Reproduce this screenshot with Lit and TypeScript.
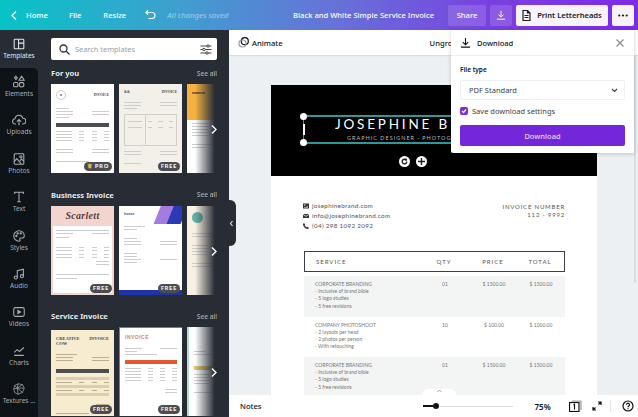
import { LitElement, html, css, svg } from "lit";
import { customElement } from "lit/decorators.js";

const railIcons: Record<string, unknown> = {
  Templates: svg`<rect x="2.5" y="2.5" width="11" height="11" rx="1"/><path d="M7.5 2.5v11M7.5 7h6"/>`,
  Elements: svg`<path d="M4.500 1.500l1.600 1.600-1.600 2.200-1.600-2.200z"/><path d="M11 1.500l3 4.500H8z"/><rect x="1.800" y="8.500" width="5" height="5" rx="1.500"/><circle cx="11" cy="11" r="2.600"/>`,
  Uploads: svg`<path d="M4.500 12.500h-.7a3 3 0 0 1-.3-6 4.600 4.600 0 0 1 9-.4 3.200 3.200 0 0 1 .2 6.400h-1.200"/><path d="M8 14V7.500M5.600 9.800L8 7.400l2.400 2.400"/>`,
  Photos: svg`<rect x="2.500" y="2" width="11" height="12" rx="1"/><circle cx="10.200" cy="5.500" r="1.300"/><path d="M2.500 11l3-3.500 5 6M9 10l2-1.800 2.500 2.500"/>`,
  Text: svg`<path d="M3 4.500V2.500h10v2M8 2.500v11M6 13.500h4"/>`,
  Styles: svg`<path d="M8 2a6 6 0 1 0 0 12c1.500 0 1.400-1.200 1-2-.5-1 .2-1.800 1.200-1.800H12c1.300 0 2-1 2-2.400C14 4.500 11.500 2 8 2z"/><circle cx="5" cy="8" r=".7"/><circle cx="6.500" cy="5" r=".7"/><circle cx="10" cy="5" r=".7"/>`,
  Audio: svg`<path d="M6 12V4.300l7-1.800v8"/><circle cx="4.300" cy="12" r="1.800"/><circle cx="11.300" cy="10.500" r="1.800"/>`,
  Videos: svg`<rect x="2" y="3" width="12" height="10" rx="1.800"/><path d="M6.800 6.200l3 1.800-3 1.800z" fill="currentColor"/>`,
  Charts: svg`<path d="M2.500 9.500l3.500-3 2.500 2 5-4.500M2.500 13h11"/>`,
  "Textures ...": svg`<path d="M3 4l4-2 5 1 2 4-2 5-5 2-4-2-1-4zM7 2l-1 5 6 5M3 4l3 3-4 1M6 7l1 7M12 3L6 7M14 7H6" stroke-width=".8"/>`,
};

type Kind = "plain" | "beige" | "orange" | "scarlett" | "shapes" | "cream" | "cow" | "stripe" | "mint";

@customElement("doc-thumb")
export class DocThumb extends LitElement {
  static properties = { kind: {}, badge: {} };
  kind: Kind = "plain";
  badge = "";

  static styles = css`
    :host {
      display: block;
      flex: none;
      width: 63px;
      height: 89px;
    }
    .t {
      position: relative;
      display: flex;
      flex-direction: column;
      gap: 2px;
      box-sizing: border-box;
      height: 100%;
      padding: 6px 5px;
      background: #fff;
      overflow: hidden;
      font-family: "Liberation Serif", serif;
      color: #444;
    }
    .head {
      display: flex;
      justify-content: space-between;
      align-items: center;
      margin-bottom: 6px;
      font-size: 3.500px;
      font-weight: 700;
    }
    .ring {
      display: flex;
      align-items: center;
      justify-content: center;
      width: 10px;
      height: 10px;
      border: 1px solid #ccc;
      border-radius: 50%;
      box-sizing: border-box;
    }
    .ring::after {
      content: "";
      width: 2px;
      height: 2px;
      border-radius: 50%;
      background: #777;
    }
    .rw {
      display: flex;
      justify-content: space-between;
      flex: none;
    }
    .l {
      height: 1px;
      width: 40%;
      background: #cdcdcd;
      flex: none;
    }
    .rw .l {
      width: 30%;
    }
    .rw .l:nth-child(n + 2) {
      width: 9%;
    }
    .rw.two .l {
      width: 32%;
    }
    .l.w {
      width: 100%;
    }
    .l.m {
      width: 62%;
    }
    .l.s {
      width: 24%;
    }
    .l.r {
      align-self: flex-end;
    }
    .bar {
      height: 4px;
      background: #4a4d52;
      margin: 3px 0 2px;
      flex: none;
    }
    .sp {
      height: 4px;
      flex: none;
    }
    .grid {
      display: flex;
      flex-direction: column;
      gap: 5px;
      box-sizing: border-box;
      height: 32px;
      flex: none;
      padding: 6px 3px;
      border: 1px solid #d2d0c6;
      margin: 3px 0;
      background: linear-gradient(90deg, transparent 40%, #d2d0c6 40%, #d2d0c6 41%, transparent 41%, transparent 62%, #d2d0c6 62%, #d2d0c6 63%, transparent 63%);
    }
    .badge {
      position: absolute;
      right: 2px;
      bottom: 2px;
      height: 9px;
      padding: 0 3px;
      border-radius: 4.500px;
      background: #4a4d52;
      color: #eee;
      font: 700 6px/9px "Noto Sans", sans-serif;
      letter-spacing: 0.6px;
    }
    .badge i {
      color: #f1b640;
      font-style: normal;
    }
    .beige {
      background: #f2f0e9;
    }
    .orange {
      background: linear-gradient(#f6b141 0 40%, #fff 40%);
    }
    .orange .head {
      color: #222;
      font: 700 4px "Liberation Sans", sans-serif;
      margin-bottom: 26px;
    }
    .scarlett {
      background: #f3d5cf;
      padding: 0 2px 2px;
    }
    .scarlett .top {
      flex: none;
      height: 18px;
      text-align: center;
      font: italic 700 10px/19px "Liberation Serif", serif;
      letter-spacing: 0.3px;
      color: #5a3e3a;
    }
    .scarlett .in {
      flex: 1;
      display: flex;
      flex-direction: column;
      gap: 2.500px;
      background: #fff;
      padding: 4px 3px;
    }
    .shapes .blob {
      position: absolute;
      top: -4px;
      right: 10px;
      width: 14px;
      height: 22px;
      background: #a67be0;
      transform: skewX(-22deg);
    }
    .shapes .blob.b {
      right: -3px;
      background: #2a3bb5;
    }
    .shapes .foot {
      position: absolute;
      left: 0;
      right: 0;
      bottom: 0;
      height: 5px;
      background: #1f33a6;
    }
    .shapes .title {
      font: 700 3px "Liberation Sans", sans-serif;
      color: #2a3bb5;
      margin-bottom: 8px;
    }
    .cream {
      background: #f8f1e3;
    }
    .cream .dot {
      width: 11px;
      height: 11px;
      border-radius: 50%;
      background: #5fb0a8;
      margin-bottom: 8px;
    }
    .cow {
      background: #f7ecd0;
      border-top: 3px solid #272c35;
    }
    .cow .head {
      align-items: flex-start;
      font-size: 4.500px;
      line-height: 5px;
    }
    .cow .bar {
      margin-top: 6px;
    }
    .cow .shade {
      height: 3px;
      background: #dbcfae;
      flex: none;
    }
    .cow .l {
      background: #b9ae92;
    }
    .stripe {
      border-left: 1px solid #e2592a;
      border-top: 1px solid #e2592a;
    }
    .stripe .head {
      color: #d88a4c;
      font: 700 5px "Liberation Sans", sans-serif;
      letter-spacing: 0.5px;
    }
    .stripe .bar {
      background: #e2592a;
    }
    .mint {
      border-left: 2px solid #bcdcd2;
      justify-content: center;
    }
    .mint .bar {
      background: #e2c56a;
    }
  `;

  body() {
    const l = (c = "") => html`<div class="l ${c}"></div>`;
    const rows = (n: number) =>
      Array.from({ length: n }, () => html`<div class="rw">${l()}${l()}${l()}${l()}</div>`);
    const two = html`<div class="rw two">${l()}${l()}</div>`;
    switch (this.kind) {
      case "beige":
        return html`<div class="head"><span>&amp;&amp;</span><span>INVOICE</span></div>
          ${two}${two}${l("s")}
          <div class="grid">${rows(2)}</div>
          ${two}${two}<div class="sp"></div>${two}`;
      case "orange":
        return html`<div class="head"><span>manna</span></div>
          ${rows(5)}<div class="sp"></div>${l()}${l("s")}`;
      case "scarlett":
        return html`<div class="top">Scarlett</div>
          <div class="in">${l("w")}${two}${l("s")}<div class="sp"></div>${rows(4)}${l("s r")}${l("s r")}<div class="sp"></div>${l("w")}${l()}</div>`;
      case "shapes":
        return html`<div class="blob"></div><div class="blob b"></div>
          <div class="title">Invoice</div>
          ${l()}${l("s")}<div class="sp"></div>${l("s")}${two}${two}<div class="sp"></div>${l("s")}${l("s")}${two}${l("s")}
          <div class="foot"></div>`;
      case "cream":
        return html`<div class="dot"></div>${l("m")}${l()}<div class="sp"></div>${rows(4)}<div class="sp"></div>${l("m")}${l()}`;
      case "cow":
        return html`<div class="head"><span>CREATIVE<br />COW</span><span>INVOICE</span></div>
          ${l()}${two}${two}<div class="bar"></div>
          <div class="shade"></div>${rows(1)}<div class="shade"></div>${rows(1)}<div class="shade"></div>
          <div class="sp"></div>${l("s r")}${l("s r")}${l("s r")}${l("m")}`;
      case "stripe":
        return html`<div class="head"><span>INVOICE</span></div>
          ${two}${l("s")}${l("m")}<div class="bar"></div>${rows(5)}<div class="sp"></div>${l("s r")}${l("s r")}`;
      case "mint":
        return html`${l("s")}${l()}<div class="sp"></div><div class="bar"></div>${rows(4)}<div class="sp"></div>${l()}`;
      default:
        return html`<div class="head"><div class="ring"></div><span>INVOICE</span></div>
          ${l("s")}${two}${two}${l("s")}<div class="bar"></div>${rows(4)}
          <div class="sp"></div>${two}${two}<div class="sp"></div>${l("m")}`;
    }
  }

  render() {
    return html`<div class="t ${this.kind}">
      ${this.body()}
      ${this.badge === "PRO"
        ? html`<span class="badge"><i>♛</i> PRO</span>`
        : this.badge
          ? html`<span class="badge">${this.badge}</span>`
          : ""}
    </div>`;
  }
}

const sections: { title: string; thumbs: [Kind, string][] }[] = [
  { title: "For you", thumbs: [["plain", "PRO"], ["beige", "FREE"], ["orange", ""]] },
  { title: "Business Invoice", thumbs: [["scarlett", "FREE"], ["shapes", "FREE"], ["cream", ""]] },
  { title: "Service Invoice", thumbs: [["cow", "FREE"], ["stripe", "FREE"], ["mint", ""]] },
];

const lineItems = [
  { name: "CORPORATE BRANDING", notes: ["Inclusive of brand bible", "5 logo studies", "5 free revisions"], qty: "01", price: "$ 1500.00", total: "$ 1500.00" },
  { name: "COMPANY PHOTOSHOOT", notes: ["2 layouts per head", "2 photos per person", "With retouching"], qty: "10", price: "$ 100.00", total: "$ 1000.00" },
  { name: "CORPORATE BRANDING", notes: ["Inclusive of brand bible", "5 logo studies", "5 free revisions"], qty: "01", price: "$ 1500.00", total: "$ 1500.00" },
];

@customElement("app-root")
export class AppRoot extends LitElement {
  static styles = css`
    :host {
      display: block;
      position: relative;
      width: 638px;
      height: 417px;
      overflow: hidden;
      font-family: "Noto Sans", "Open Sans", sans-serif;
      color: #0e1318;
    }
    svg {
      display: block;
      fill: none;
      stroke: currentColor;
      stroke-width: 1.2;
      flex: none;
    }
    .app {
      display: flex;
      flex-direction: column;
      height: 100%;
    }

    /* top bar */
    .top {
      flex: none;
      height: 30px;
      display: flex;
      align-items: center;
      padding: 0 4px 0 11px;
      background: linear-gradient(90deg, #06c3c6 0%, #3f9fd0 28%, #6673d8 52%, #7a3fe0 78%, #7d2ae8 100%);
      color: #fff;
      font-size: 7.600px;
      font-weight: 500;
    }
    .top .home {
      margin-left: 9px;
    }
    .top .file {
      margin-left: 21px;
    }
    .top .resize {
      margin-left: 22px;
    }
    .top .undo {
      margin-left: 19px;
    }
    .top .saved {
      margin-left: 11px;
      font-style: italic;
      font-size: 7.800px;
      font-weight: 400;
      color: rgba(255, 255, 255, 0.5);
    }
    .top .title {
      margin-left: auto;
      margin-right: 14px;
    }
    .btn {
      display: flex;
      align-items: center;
      justify-content: center;
      height: 21px;
      border-radius: 2px;
      background: rgba(255, 255, 255, 0.14);
      margin-left: 4px;
    }
    .btn.share {
      width: 38px;
      margin-left: 0;
    }
    .btn.dl {
      width: 22px;
    }
    .btn.print {
      width: 92px;
      gap: 6px;
      background: #f6f3fb;
      color: #1c2126;
      font-weight: 600;
    }
    .btn.more {
      width: 22px;
      background: #f6f3fb;
      color: #1c2126;
    }

    .body {
      flex: 1;
      min-height: 0;
      display: flex;
    }

    /* icon rail */
    .rail {
      flex: none;
      width: 38px;
      background: #272c35;
      display: flex;
      flex-direction: column;
    }
    .rail-list {
      flex: 1;
      background: #0e1318;
      border-top-right-radius: 5px;
    }
    .ri {
      height: 38.400px;
      box-sizing: border-box;
      padding-top: 7px;
      display: flex;
      flex-direction: column;
      align-items: center;
      gap: 1px;
      font-size: 6.500px;
      line-height: 8px;
      color: #a9adb2;
      white-space: nowrap;
    }
    .ri.on {
      color: #e6e8ea;
      height: 38px;
    }

    /* template panel */
    .panel {
      flex: none;
      width: 191px;
      box-sizing: border-box;
      padding: 8px 12px 0 13px;
      background: #272c35;
      color: #fff;
      overflow: hidden;
    }
    .search {
      height: 22px;
      display: flex;
      align-items: center;
      gap: 5px;
      padding: 0 5px 0 8px;
      background: #fff;
      border-radius: 2px;
      color: #2c3238;
      font-size: 7.400px;
    }
    .search span {
      flex: 1;
      color: #9a9ea3;
    }
    .sec-head {
      display: flex;
      justify-content: space-between;
      align-items: center;
      height: 12px;
      margin: 7px 0 5px;
      font-size: 7.600px;
      font-weight: 700;
      color: #e6e8ea;
    }
    .sec + .sec .sec-head {
      margin-top: 15.500px;
    }
    .sec-head em {
      font-style: normal;
      font-weight: 500;
      font-size: 6.600px;
      color: #a9adb2;
    }
    .row {
      position: relative;
      display: flex;
      gap: 5px;
      overflow: hidden;
    }
    .row::after {
      content: "";
      position: absolute;
      top: 0;
      bottom: 0;
      right: 0;
      width: 22px;
      background: linear-gradient(90deg, rgba(39, 44, 53, 0), #272c35 90%);
    }
    .row svg {
      position: absolute;
      z-index: 1;
      right: 0;
      top: 41px;
      color: #fff;
      stroke-width: 1.400;
    }

    /* editor */
    .main {
      position: relative;
      flex: 1;
      min-width: 0;
      display: flex;
      flex-direction: column;
      background: #ecf0f2;
    }
    .bar {
      flex: none;
      height: 25px;
      display: flex;
      align-items: center;
      gap: 3px;
      padding-left: 9px;
      background: #fff;
      font-size: 7.600px;
      font-weight: 500;
      box-shadow: 0 1px 1px rgba(14, 19, 24, 0.08);
    }
    .bar .ungroup {
      width: 23px;
      margin-left: 144px;
      overflow: hidden;
      white-space: nowrap;
    }
    .canvas {
      flex: 1;
      min-height: 0;
      padding: 30px 0 0 42px;
      overflow: hidden;
    }
    .doc {
      position: relative;
      width: 326px;
      height: 400px;
      background: #fff;
      color: #555;
    }
    .banner {
      height: 91px;
      box-sizing: border-box;
      padding: 30px 0 0 64px;
      background: #000;
      color: #fff;
      font-family: Lato, sans-serif;
      white-space: nowrap;
    }
    .name {
      width: 116px;
      overflow: hidden;
      font-size: 13.500px;
      line-height: 18px;
      letter-spacing: 2.800px;
    }
    .role {
      width: 104px;
      overflow: hidden;
      margin: 1px 0 0 12px;
      font-size: 5.500px;
      line-height: 8px;
      letter-spacing: 1px;
      color: #bbb;
    }
    .sel {
      position: absolute;
      left: 32px;
      top: 30px;
      width: 148px;
      height: 25px;
      border: solid #2f9797;
      border-width: 2px 0 2px 1px;
    }
    .sel i {
      position: absolute;
      left: -4px;
      width: 7px;
      height: 7px;
      border-radius: 50%;
      background: #fff;
    }
    .sel i.a {
      top: -4px;
    }
    .sel i.b {
      bottom: -4px;
    }
    .sel b {
      position: absolute;
      left: -1px;
      top: 7px;
      width: 2px;
      height: 11px;
      background: #fff;
    }
    .tools {
      position: absolute;
      left: 128px;
      top: 71px;
      display: flex;
      gap: 6px;
    }
    .tools span {
      display: flex;
      align-items: center;
      justify-content: center;
      width: 11px;
      height: 11px;
      border-radius: 50%;
      background: #fff;
      color: #222;
    }
    .info {
      display: flex;
      justify-content: space-between;
      padding: 25px 32px 0;
      font-family: Lato, sans-serif;
      font-size: 6.300px;
      line-height: 10px;
      letter-spacing: 0.3px;
    }
    .info .c {
      display: flex;
      align-items: center;
      gap: 3px;
    }
    .info .c svg {
      fill: #333;
      stroke: none;
    }
    .info .n {
      text-align: right;
      padding-top: 2px;
      font-size: 6px;
      line-height: 8px;
      letter-spacing: 0.8px;
    }
    .cols {
      display: grid;
      grid-template-columns: 1fr 52px 46px 48px;
      justify-items: center;
      padding-left: 11px;
    }
    .cols > :first-child {
      justify-self: start;
    }
    .thead {
      margin: 20px 32px 0 33px;
      height: 21px;
      box-sizing: border-box;
      align-items: center;
      border: 1px solid #3a3f44;
      font: 6px Lato, sans-serif;
      letter-spacing: 1px;
    }
    .tr {
      margin: 0 32px 0 33px;
      height: 40.500px;
      box-sizing: border-box;
      padding-top: 5px;
      font: 5px/7.200px Lato, sans-serif;
      color: #777;
    }
    .tr:nth-child(odd) {
      background: #f3f4f4;
    }
    .rows {
      margin-top: 4px;
    }
    .tabtop {
      position: absolute;
      left: 193px;
      bottom: 22px;
      width: 34px;
      height: 6px;
      background: #fff;
      border-radius: 8px 8px 0 0;
      display: flex;
      justify-content: center;
      color: #888;
    }

    /* bottom bar */
    .foot {
      flex: none;
      height: 22px;
      display: flex;
      align-items: center;
      padding-left: 11px;
      background: #fff;
      font-size: 7.600px;
      font-weight: 500;
      position: relative;
    }
    .slider {
      display: flex;
      align-items: center;
      margin-left: 161px;
      width: 90px;
    }
    .slider .on {
      width: 10px;
      height: 1.500px;
      background: #0e1318;
    }
    .slider .knob {
      width: 6px;
      height: 6px;
      border-radius: 50%;
      background: #0e1318;
    }
    .slider .off {
      flex: 1;
      height: 1px;
      background: #d9dcde;
    }
    .foot .pct {
      margin-left: 22px;
      font-size: 8px;
      font-weight: 600;
    }
    .foot .pg {
      margin-left: 18px;
    }
    .foot .ex {
      margin-left: 10px;
    }
    .foot .div {
      width: 1px;
      height: 12px;
      margin-left: 8px;
      background: #e3e5e7;
    }
    .foot .help {
      margin-left: 11px;
    }

    /* handle on the panel edge */
    .handle {
      position: absolute;
      left: 229px;
      top: 200px;
      width: 7px;
      height: 46px;
      display: flex;
      align-items: center;
      background: #272c35;
      border-radius: 0 6px 6px 0;
      color: #d5d7d9;
    }

    .scroll {
      position: absolute;
      right: 2px;
      top: 55px;
      width: 2px;
      height: 228px;
      border-radius: 1px;
      background: #d9dde0;
    }

    /* download menu */
    .pop {
      position: absolute;
      left: 451px;
      top: 30px;
      width: 183px;
      height: 123px;
      background: #fff;
      border-radius: 0 0 2px 2px;
      box-shadow: 0 1px 4px rgba(14, 19, 24, 0.2);
      font-size: 7.500px;
    }
    .pop-head {
      height: 25px;
      display: flex;
      align-items: center;
      gap: 6px;
      padding: 0 10px 0 9px;
      font-weight: 500;
      border-bottom: 1px solid #eceef0;
    }
    .pop-head .x {
      margin-left: auto;
      color: #8b8f94;
    }
    .pop-body {
      padding: 9px 9px 0;
    }
    .lbl {
      font-size: 6.500px;
      line-height: 10px;
      font-weight: 600;
    }
    .select {
      display: flex;
      justify-content: space-between;
      align-items: center;
      height: 20px;
      box-sizing: border-box;
      margin-top: 5px;
      padding: 0 6px 0 8px;
      border: 1px solid #eef0f1;
      border-radius: 2px;
      color: #3a3f44;
    }
    .check {
      display: flex;
      align-items: center;
      gap: 4px;
      margin-top: 5px;
      height: 11px;
      color: #3a3f44;
    }
    .box {
      display: flex;
      width: 8px;
      height: 8px;
      border-radius: 2px;
      background: #7d2ae8;
      color: #fff;
    }
    .go {
      display: flex;
      align-items: center;
      justify-content: center;
      height: 21px;
      margin-top: 9px;
      border-radius: 2px;
      background: #7427d8;
      color: #e4d6f8;
      font-weight: 500;
    }
  `;

  private dlIcon(size: number) {
    return html`<svg width=${size} height=${size} viewBox="0 0 12 12">
      <path d="M6 1v7M3 5.500L6 8.500l3-3M1 11h10" />
    </svg>`;
  }

  render() {
    return html`<div class="app">
      <header class="top">
        <svg width="6" height="9" viewBox="0 0 6 9"><path d="M5 .5l-4 4 4 4" /></svg>
        <span class="home">Home</span>
        <span class="file">File</span>
        <span class="resize">Resize</span>
        <svg class="undo" width="11" height="10" viewBox="0 0 11 10"><path d="M3 .5L1 2.500l2 2M1 2.500h6a3 3 0 0 1 0 6H3.500" /></svg>
        <span class="saved">All changes saved</span>
        <span class="title">Black and White Simple Service Invoice</span>
        <div class="btn share">Share</div>
        <div class="btn dl">${this.dlIcon(10)}</div>
        <div class="btn print">
          <svg width="9" height="11" viewBox="0 0 9 11"><path d="M1 .5h4.500L8 3v7.500H1zM5.500.5V3H8M2.500 5.500h4M2.500 7.500h4" /></svg>
          Print Letterheads
        </div>
        <div class="btn more">
          <svg width="10" height="3" viewBox="0 0 10 3" style="fill:currentColor;stroke:none"><circle cx="1.300" cy="1.500" r="1.100" /><circle cx="5" cy="1.500" r="1.100" /><circle cx="8.700" cy="1.500" r="1.100" /></svg>
        </div>
      </header>
      <div class="body">
        <nav class="rail">
          ${this.railItem("Templates", true)}
          <div class="rail-list">
            ${Object.keys(railIcons).slice(1).map((k) => this.railItem(k, false))}
          </div>
        </nav>
        <aside class="panel">
          <div class="search">
            <svg width="11" height="11" viewBox="0 0 11 11" style="stroke-width:1.300"><circle cx="4.500" cy="4.500" r="3.500" /><path d="M7 7l3.500 3.500" /></svg>
            <span>Search templates</span>
            <svg width="12" height="11" viewBox="0 0 12 11" style="stroke-width:.9"><path d="M.5 2h11M.5 5.500h11M.5 9h11" /><circle cx="8" cy="2" r="1.200" fill="#fff" /><circle cx="4" cy="5.500" r="1.200" fill="#fff" /><circle cx="7" cy="9" r="1.200" fill="#fff" /></svg>
          </div>
          ${sections.map(
            (s) => html`<section class="sec">
              <div class="sec-head">${s.title}<em>See all</em></div>
              <div class="row">
                ${s.thumbs.map(([k, b]) => html`<doc-thumb .kind=${k} .badge=${b}></doc-thumb>`)}
                <svg width="6" height="9" viewBox="0 0 6 9"><path d="M1 .5l4 4-4 4" /></svg>
              </div>
            </section>`
          )}
        </aside>
        <main class="main">
          <div class="bar">
            <svg width="11" height="11" viewBox="0 0 11 11"><circle cx="6.800" cy="4.200" r="3.500" /><circle cx="4.500" cy="6.500" r="3.500" stroke="#999" /></svg>
            <span>Animate</span>
            <span class="ungroup">Ungroup</span>
          </div>
          <div class="canvas">
            <div class="doc">
              <div class="banner">
                <div class="name">JOSEPHINE BRAND</div>
                <div class="role">GRAPHIC DESIGNER · PHOTOGRAPHER</div>
              </div>
              <div class="sel"><i class="a"></i><b></b><i class="b"></i></div>
              <div class="tools">
                <span><svg width="7" height="7" viewBox="0 0 6 6"><path d="M5 3a2 2 0 1 1-.6-1.400M4.500.5v1.200H3.300" /></svg></span>
                <span><svg width="7" height="7" viewBox="0 0 6 6"><path d="M3 0v6M0 3h6" /></svg></span>
              </div>
              <div class="info">
                <div>
                  <div class="c"><svg width="6" height="6" viewBox="0 0 6 6"><path d="M0 .5h6v5H0zM1 1.500v1h1.500v-1zM3.500 3v.5H5V3zM1 4v.5h4V4z" fill-rule="evenodd" /></svg>josephinebrand.com</div>
                  <div class="c"><svg width="6" height="6" viewBox="0 0 6 6"><path d="M0 1h6L3 3zM0 1.800L3 3.800l3-2V5H0z" /></svg>info@josephinebrand.com</div>
                  <div class="c"><svg width="6" height="6" viewBox="0 0 6 6"><path d="M1 0l1.200 1.500-.6 1 1.800 1.800 1-.6L6 5 5 6C2 6 0 3 0 1z" /></svg>(04) 298 1092 2092</div>
                </div>
                <div class="n">INVOICE NUMBER<br />112 - 9992</div>
              </div>
              <div class="cols thead"><span>SERVICE</span><span>QTY</span><span>PRICE</span><span>TOTAL</span></div>
              <div class="rows">
                ${lineItems.map(
                  (r) => html`<div class="cols tr">
                    <div>${r.name}${r.notes.map((n) => html`<br />- ${n}`)}</div>
                    <span>${r.qty}</span><span>${r.price}</span><span>${r.total}</span>
                  </div>`
                )}
              </div>
            </div>
          </div>
          <div class="tabtop"><svg width="5" height="4" viewBox="0 0 5 4" style="stroke-width:.8"><path d="M.5 3L2.500 1l2 2" /></svg></div>
          <div class="foot">
            <span>Notes</span>
            <div class="slider"><div class="on"></div><div class="knob"></div><div class="off"></div></div>
            <span class="pct">75%</span>
            <svg class="pg" width="13" height="12" viewBox="0 0 13 12"><path d="M3 1h9v9" stroke="#999" /><rect x=".5" y="2.500" width="9.500" height="9" /><path d="M4.500 5l1-.6v5" /></svg>
            <svg class="ex" width="10" height="10" viewBox="0 0 10 10"><path d="M6 1h3v3M9 1L6.500 3.500M4 9H1V6M1 9l2.500-2.500" /></svg>
            <div class="div"></div>
            <svg class="help" width="12" height="12" viewBox="0 0 12 12"><circle cx="6" cy="6" r="5" /><path d="M4.500 4.700a1.500 1.500 0 1 1 2.300 1.300c-.6.400-.8.700-.8 1.300M6 8.300v1" /></svg>
          </div>
        </main>
      </div>
      <div class="handle"><svg width="5" height="7" viewBox="0 0 5 7"><path d="M3.500 1L1.500 3.500l2 2.500" /></svg></div>
      <div class="scroll"></div>
      <div class="pop">
        <div class="pop-head">
          ${this.dlIcon(11)}
          <span>Download</span>
          <svg class="x" width="8" height="8" viewBox="0 0 8 8"><path d="M.5.5l7 7M7.500.5l-7 7" /></svg>
        </div>
        <div class="pop-body">
          <div class="lbl">File type</div>
          <div class="select">
            PDF Standard
            <svg width="7" height="5" viewBox="0 0 7 5"><path d="M1 1l2.500 2.500L6 1" /></svg>
          </div>
          <div class="check">
            <span class="box"><svg width="8" height="8" viewBox="0 0 8 8"><path d="M2 4l1.500 1.500L6 2.500" /></svg></span>
            Save download settings
          </div>
          <div class="go">Download</div>
        </div>
      </div>
    </div>`;
  }

  private railItem(label: string, on: boolean) {
    return html`<div class="ri ${on ? "on" : ""}">
      <svg width="14" height="14" viewBox="0 0 16 16">${railIcons[label]}</svg>
      ${label}
    </div>`;
  }
}
